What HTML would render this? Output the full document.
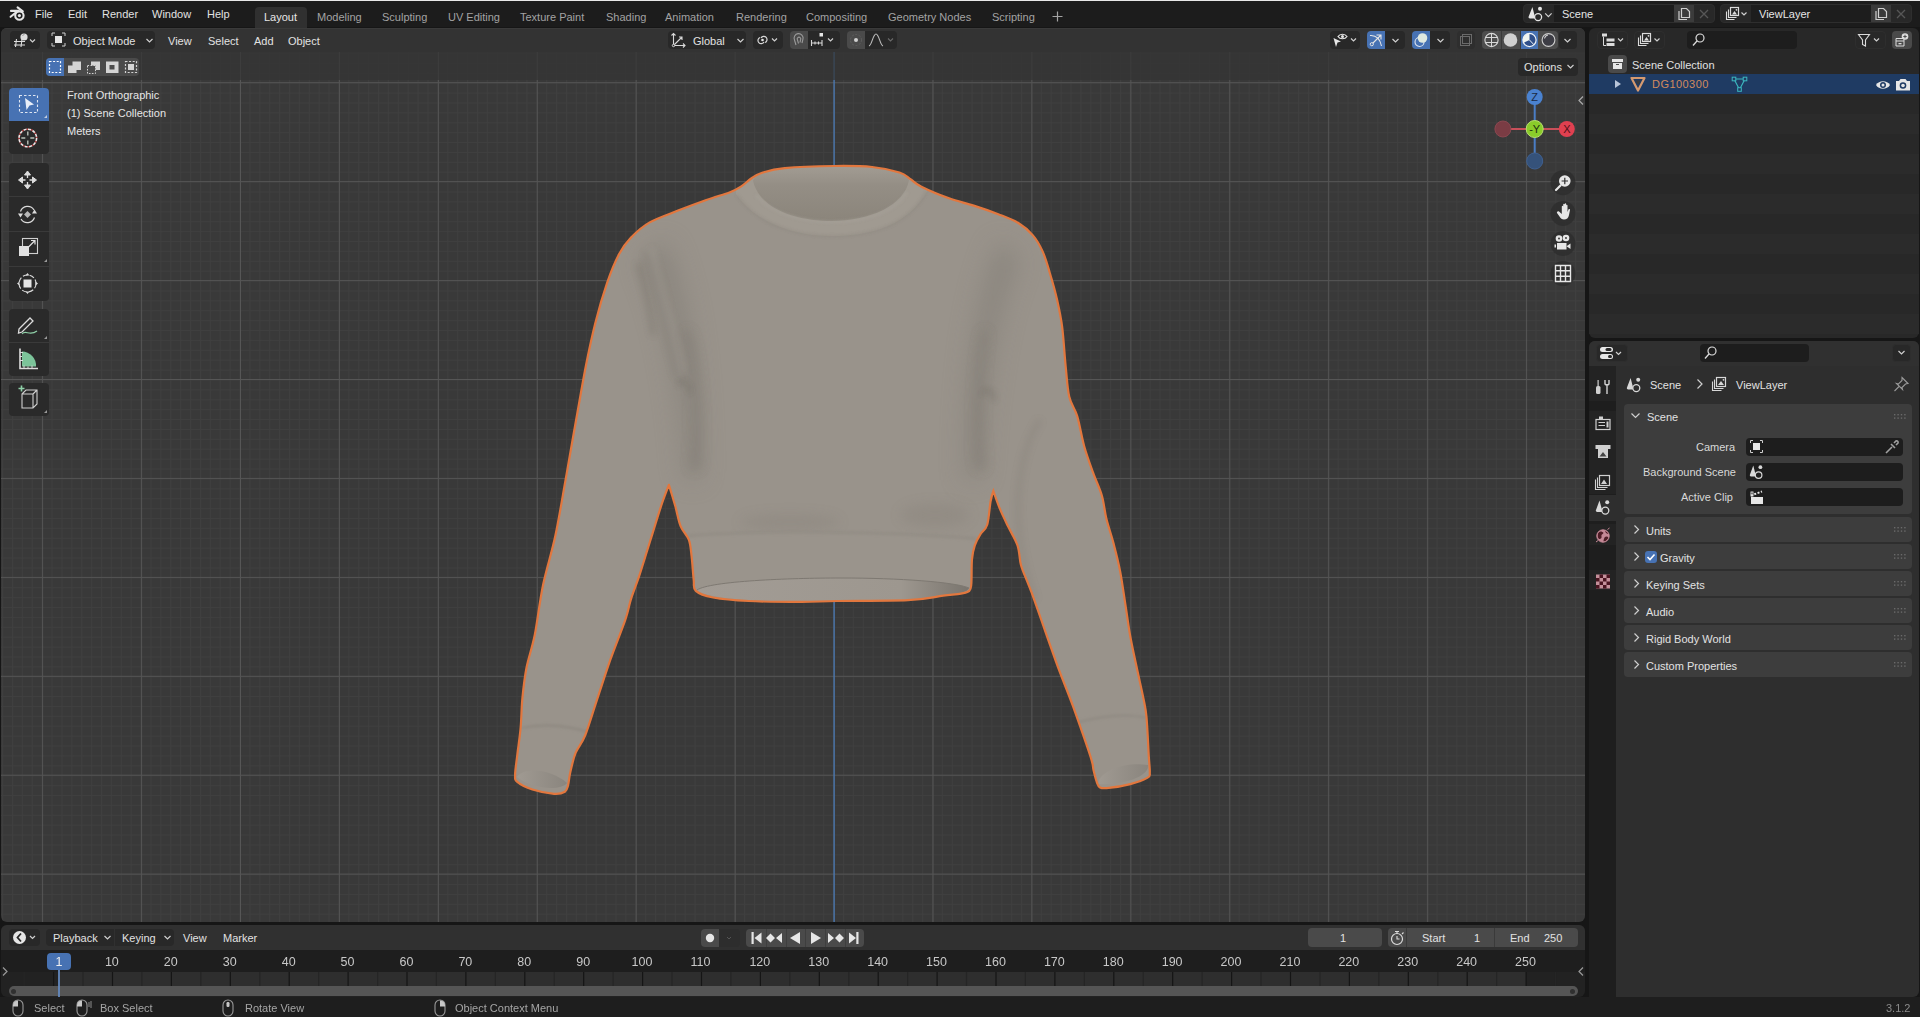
<!DOCTYPE html>
<html><head><meta charset="utf-8">
<style>
*{box-sizing:border-box;margin:0;padding:0}
html,body{width:1920px;height:1017px;overflow:hidden;background:#161616;font-family:"Liberation Sans",sans-serif;font-size:11px;color:#e6e6e6}
.a{position:absolute}
.t{position:absolute;white-space:pre;line-height:13px;font-size:11px;color:#e2e2e2;margin-left:1px}
.g{color:#a3a3a3}
.btn{position:absolute;background:#282828;border-radius:4px;border:1px solid #2c2c2c}
.dd{position:absolute;background:#282828;border-radius:4px}
svg{position:absolute;overflow:visible}
</style></head><body>
<div class="a" style="left:0;top:0;width:1920px;height:1px;background:#e8e8e8"></div>

<!-- ================= TOPBAR ================= -->
<div class="a" style="left:0;top:1px;width:1920px;height:26px;background:#1c1c1c">
</div>
<svg style="left:0;top:0" width="30" height="27">
 <circle cx="19.4" cy="15.6" r="4.2" fill="none" stroke="#e6e6e6" stroke-width="2.1"/>
 <circle cx="19.4" cy="15.6" r="1.6" fill="#e6e6e6"/>
 <path d="M11,10.9 H18.5" stroke="#e6e6e6" stroke-width="2.1" stroke-linecap="round"/>
 <path d="M10.6,16.8 L15.6,12.8" stroke="#e6e6e6" stroke-width="2.1" stroke-linecap="round"/>
 <path d="M17.6,7.3 L22.8,11.3" stroke="#e6e6e6" stroke-width="2.1" stroke-linecap="round"/>
</svg>
<div class="t" style="left:34px;top:8px">File</div>
<div class="t" style="left:67px;top:8px">Edit</div>
<div class="t" style="left:101px;top:8px">Render</div>
<div class="t" style="left:151px;top:8px">Window</div>
<div class="t" style="left:206px;top:8px">Help</div>
<div class="a" style="left:255px;top:7px;width:52px;height:21px;background:#303030;border-radius:4px 4px 0 0"></div>
<div class="t" style="left:263px;top:11px;color:#e6e6e6">Layout</div>
<div class="t g" style="left:316px;top:11px">Modeling</div>
<div class="t g" style="left:381px;top:11px">Sculpting</div>
<div class="t g" style="left:447px;top:11px">UV Editing</div>
<div class="t g" style="left:519px;top:11px">Texture Paint</div>
<div class="t g" style="left:605px;top:11px">Shading</div>
<div class="t g" style="left:664px;top:11px">Animation</div>
<div class="t g" style="left:735px;top:11px">Rendering</div>
<div class="t g" style="left:805px;top:11px">Compositing</div>
<div class="t g" style="left:887px;top:11px">Geometry Nodes</div>
<div class="t g" style="left:991px;top:11px">Scripting</div>
<svg style="left:1052px;top:11px" width="11" height="11"><path d="M5.5,0.5 V10.5 M0.5,5.5 H10.5" stroke="#a3a3a3" stroke-width="1.2"/></svg>
<!-- scene selector -->
<div class="a" style="left:1523px;top:4px;width:192px;height:19px;background:#282828;border-radius:4px;border:1px solid #2e2e2e"></div>
<div class="a" style="left:1554px;top:5px;width:120px;height:17px;background:#1d1d1d"></div>
<div class="a" style="left:1674px;top:5px;width:20px;height:17px;background:#3b3b3b"></div>
<svg style="left:1529px;top:6px" width="24" height="15">
 <path d="M3.4,0.9 L-0.5,11 Q-0.7,12.4 1,12.5 L5.6,12.6 Q6.5,12.4 6,11Z" fill="#e6e6e6"/><circle cx="11" cy="2.8" r="2" fill="#e6e6e6"/>
 <circle cx="9.1" cy="11.1" r="3.5" fill="#282828" stroke="#e6e6e6" stroke-width="1.3"/>
 <path d="M16.2,7.4 L19.4,10.6 L22.6,7.4" stroke="#cfcfcf" stroke-width="1.2" fill="none"/>
</svg>
<div class="t" style="left:1561px;top:7.5px;color:#e6e6e6">Scene</div>
<svg style="left:1677px;top:7px" width="14" height="13">
 <path d="M4.5,1.5 H9.5 L12.5,4.5 V10.5 H4.5 Z M2,4 V12.5 H10" stroke="#cfcfcf" stroke-width="1.2" fill="none"/>
</svg>
<svg style="left:1699px;top:9px" width="10" height="10"><path d="M1,1 L9,9 M9,1 L1,9" stroke="#575757" stroke-width="1.3"/></svg>
<!-- view layer selector -->
<div class="a" style="left:1720px;top:4px;width:192px;height:19px;background:#282828;border-radius:4px;border:1px solid #2e2e2e"></div>
<div class="a" style="left:1751px;top:5px;width:120px;height:17px;background:#1d1d1d"></div>
<div class="a" style="left:1871px;top:5px;width:20px;height:17px;background:#3b3b3b"></div>
<svg style="left:1725px;top:6px" width="24" height="15">
 <rect x="5.5" y="1.5" width="8" height="8" fill="none" stroke="#dcdcdc" stroke-width="1.2"/>
 <path d="M7,8.5 L9.5,5 L12,8.5Z" fill="#dcdcdc"/><circle cx="11.5" cy="3.8" r="0.9" fill="#dcdcdc"/>
 <path d="M3.5,3.5 V11.5 H11.5 M1.5,5.5 V13.5 H9.5" stroke="#dcdcdc" stroke-width="1.1" fill="none"/>
 <path d="M16.5,6.5 L19,9 L21.5,6.5" stroke="#cfcfcf" stroke-width="1.2" fill="none"/>
</svg>
<div class="t" style="left:1758px;top:7.5px;color:#e6e6e6">ViewLayer</div>
<svg style="left:1874px;top:7px" width="14" height="13">
 <path d="M4.5,1.5 H9.5 L12.5,4.5 V10.5 H4.5 Z M2,4 V12.5 H10" stroke="#cfcfcf" stroke-width="1.2" fill="none"/>
</svg>
<svg style="left:1896px;top:9px" width="10" height="10"><path d="M1,1 L9,9 M9,1 L1,9" stroke="#575757" stroke-width="1.3"/></svg>


<!-- ================= VIEWPORT ================= -->
<div id="viewport" class="a" style="left:1px;top:28px;width:1584px;height:894px;background:#393939;border-radius:6px;overflow:hidden">
 <svg style="left:-1px;top:0" width="1590" height="900">
  <defs><pattern id="minor" x="239.5" y="54.7" width="9.893" height="9.893" patternUnits="userSpaceOnUse">
   <path d="M0,0.5 H9.893 M0.5,0 V9.893" stroke="#3f3f3f" stroke-width="1" fill="none"/></pattern></defs>
  <rect x="0" y="0" width="1590" height="900" fill="url(#minor)"/>
  <g stroke="#565656" stroke-width="1"><line x1="42.6" y1="0" x2="42.6" y2="900"/><line x1="141.6" y1="0" x2="141.6" y2="900"/><line x1="240.5" y1="0" x2="240.5" y2="900"/><line x1="339.4" y1="0" x2="339.4" y2="900"/><line x1="438.4" y1="0" x2="438.4" y2="900"/><line x1="537.3" y1="0" x2="537.3" y2="900"/><line x1="636.2" y1="0" x2="636.2" y2="900"/><line x1="735.2" y1="0" x2="735.2" y2="900"/><line x1="933.0" y1="0" x2="933.0" y2="900"/><line x1="1031.9" y1="0" x2="1031.9" y2="900"/><line x1="1130.9" y1="0" x2="1130.9" y2="900"/><line x1="1229.8" y1="0" x2="1229.8" y2="900"/><line x1="1328.7" y1="0" x2="1328.7" y2="900"/><line x1="1427.7" y1="0" x2="1427.7" y2="900"/><line x1="1526.6" y1="0" x2="1526.6" y2="900"/><line x1="0" y1="54.7" x2="1590" y2="54.7"/><line x1="0" y1="153.6" x2="1590" y2="153.6"/><line x1="0" y1="252.6" x2="1590" y2="252.6"/><line x1="0" y1="351.5" x2="1590" y2="351.5"/><line x1="0" y1="450.4" x2="1590" y2="450.4"/><line x1="0" y1="549.4" x2="1590" y2="549.4"/><line x1="0" y1="648.3" x2="1590" y2="648.3"/><line x1="0" y1="747.2" x2="1590" y2="747.2"/><line x1="0" y1="846.1" x2="1590" y2="846.1"/></g>
  <line x1="834.1" y1="0" x2="834.1" y2="900" stroke="#4b78b0" stroke-width="1.4"/>
 </svg>
 <svg style="left:-1px;top:-28px" width="1590" height="921">
 <defs>
  <clipPath id="sw"><path d="M833.9,166.0 C848.5,165.8 861.3,165.9 872.2,167.0 C883.1,168.1 893.1,170.5 899.5,172.5 C905.9,174.5 906.9,176.7 910.5,179.1 C914.1,181.5 915.0,183.5 921.4,186.7 C927.8,189.9 940.4,195.2 949.1,198.3 C957.8,201.5 965.5,202.9 973.7,205.6 C981.9,208.2 990.9,211.3 998.3,214.2 C1005.7,217.1 1012.3,219.3 1018.0,222.8 C1023.7,226.3 1028.6,230.4 1032.7,235.1 C1036.8,239.8 1039.6,244.8 1042.5,251.1 C1045.4,257.4 1047.5,265.0 1049.9,273.2 C1052.4,281.4 1055.2,291.2 1057.2,300.2 C1059.2,309.2 1060.8,316.1 1062.2,327.2 C1063.6,338.2 1064.5,354.9 1065.7,366.5 C1066.9,378.1 1067.3,388.3 1069.2,396.6 C1071.1,404.9 1074.7,407.8 1077.2,416.1 C1079.7,424.4 1081.6,436.8 1084.2,446.2 C1086.8,455.6 1090.1,464.4 1093.1,472.7 C1096.0,481.0 1099.7,488.1 1101.9,495.8 C1104.1,503.5 1104.5,510.8 1106.4,518.8 C1108.4,526.8 1111.3,534.8 1113.6,543.6 C1115.9,552.4 1118.2,561.0 1120.2,571.6 C1122.2,582.2 1124.1,596.2 1125.8,607.1 C1127.5,618.0 1128.5,626.7 1130.4,637.0 C1132.3,647.3 1134.8,658.5 1137.0,668.8 C1139.2,679.1 1141.9,690.7 1143.5,698.7 C1145.1,706.7 1145.6,707.6 1146.5,717.0 C1147.4,726.4 1148.2,745.7 1148.7,754.9 C1149.2,764.1 1150.0,768.4 1149.8,772.2 C1149.6,776.0 1150.8,775.6 1147.6,777.6 C1144.3,779.6 1136.8,782.4 1130.3,784.1 C1123.8,785.8 1113.8,787.4 1108.7,787.9 C1103.7,788.4 1102.0,788.4 1100.0,787.4 C1098.0,786.4 1097.9,784.9 1096.8,782.0 C1095.7,779.1 1094.5,774.2 1093.5,770.0 C1092.5,765.8 1094.0,767.6 1090.6,756.9 C1087.1,746.2 1078.0,720.2 1072.8,705.7 C1067.5,691.2 1063.4,681.7 1059.1,670.2 C1054.8,658.7 1051.4,648.6 1047.2,636.8 C1043.0,624.9 1037.3,608.4 1034.0,599.1 C1030.7,589.8 1029.3,586.9 1027.1,581.2 C1024.9,575.5 1022.5,570.7 1020.9,564.7 C1019.3,558.7 1019.7,551.8 1017.5,545.4 C1015.3,539.0 1010.9,532.3 1007.9,526.1 C1004.9,519.9 1002.0,514.0 999.6,508.2 C997.2,502.3 993.4,491.0 993.4,491.0 C993.4,491.0 991.6,495.7 990.6,501.3 C989.6,506.9 988.9,519.2 987.2,524.7 C985.5,530.2 982.4,531.0 980.3,534.4 C978.2,537.8 976.2,541.3 974.8,545.4 C973.4,549.5 972.6,552.8 972.0,559.2 C971.4,565.6 971.8,578.7 971.3,584.0 C970.8,589.3 971.0,589.3 969.3,590.9 C967.6,592.5 965.3,592.8 961.0,593.6 C956.7,594.4 952.1,594.6 943.3,595.7 C934.4,596.8 925.6,599.3 907.9,600.2 C890.2,601.1 854.8,600.7 837.1,601.0 C819.4,601.3 816.5,601.9 801.7,601.9 C786.9,601.9 763.3,601.7 748.5,601.0 C733.7,600.3 721.9,599.2 713.1,597.5 C704.3,595.8 699.0,593.9 695.8,590.9 C692.6,587.9 694.4,585.5 693.7,579.8 C693.0,574.0 692.4,563.0 691.6,556.4 C690.8,549.8 690.7,544.9 688.9,539.9 C687.1,534.9 682.9,531.8 680.6,526.1 C678.3,520.4 677.1,512.4 675.1,505.5 C673.1,498.6 668.9,484.8 668.9,484.8 C668.9,484.8 663.9,497.7 661.3,505.5 C658.7,513.3 655.6,523.6 653.1,531.6 C650.6,539.6 648.5,546.4 646.2,553.7 C643.9,561.1 641.8,568.1 639.3,575.7 C636.8,583.3 633.4,591.7 631.0,599.1 C628.6,606.5 628.7,609.9 625.2,620.1 C621.7,630.3 614.9,646.8 610.2,660.2 C605.5,673.6 601.0,687.9 596.8,700.4 C592.6,712.9 588.6,726.8 585.1,735.5 C581.6,744.2 578.2,746.6 575.7,752.7 C573.2,758.8 571.6,766.8 570.3,772.2 C569.0,777.6 569.0,782.0 568.1,785.2 C567.2,788.5 567.2,790.3 564.9,791.7 C562.6,793.1 559.5,794.2 554.1,793.8 C548.7,793.4 538.5,791.5 532.4,789.5 C526.3,787.5 520.2,784.4 517.3,781.9 C514.4,779.4 515.1,778.9 515.1,774.4 C515.1,769.9 516.4,762.6 517.3,754.9 C518.2,747.1 519.8,737.4 520.6,727.9 C521.5,718.4 521.4,708.1 522.4,698.1 C523.4,688.1 524.4,678.3 526.5,667.8 C528.6,657.2 532.0,648.6 534.8,634.8 C537.5,621.0 539.6,601.7 543.0,585.2 C546.4,568.7 551.5,554.0 555.4,535.6 C559.3,517.2 562.9,494.4 566.4,475.1 C569.9,455.8 572.8,438.3 576.1,420.0 C579.4,401.7 582.8,381.4 586.0,365.2 C589.2,349.0 591.9,336.5 595.4,322.7 C598.9,308.9 603.3,294.0 607.2,282.6 C611.1,271.2 615.1,261.8 619.0,254.3 C622.9,246.8 625.7,243.1 630.8,237.8 C635.9,232.5 641.8,226.9 649.7,222.4 C657.6,217.9 668.6,214.3 678.0,210.6 C687.4,206.9 697.6,203.1 706.3,200.0 C715.0,196.9 724.2,194.4 730.0,192.2 C735.8,190.0 737.2,189.1 740.9,186.7 C744.5,184.3 748.2,180.4 751.9,178.0 C755.5,175.6 757.3,174.2 762.8,172.5 C768.3,170.8 772.9,169.2 784.7,168.1 C796.6,167.0 819.3,166.2 833.9,166.0Z"/></clipPath>
  <filter id="b2" x="-50%" y="-50%" width="200%" height="200%"><feGaussianBlur stdDeviation="1.5"/></filter>
  <filter id="b3" x="-50%" y="-50%" width="200%" height="200%"><feGaussianBlur stdDeviation="3"/></filter>
  <filter id="b6" x="-50%" y="-50%" width="200%" height="200%"><feGaussianBlur stdDeviation="6"/></filter>
  <filter id="b12" x="-50%" y="-50%" width="200%" height="200%"><feGaussianBlur stdDeviation="12"/></filter>
  <linearGradient id="neckg" x1="0" y1="0" x2="0" y2="1">
   <stop offset="0" stop-color="#a29c93"/><stop offset="0.35" stop-color="#948e85"/><stop offset="1" stop-color="#8b857b"/></linearGradient>
  <linearGradient id="hemg" x1="0" y1="0" x2="1" y2="0">
   <stop offset="0" stop-color="#a29c95"/><stop offset="0.75" stop-color="#9d978f"/><stop offset="1" stop-color="#7a756e"/></linearGradient>
  <linearGradient id="cuffg" x1="0" y1="0" x2="1" y2="0">
   <stop offset="0" stop-color="#a09a92"/><stop offset="1" stop-color="#8a857e"/></linearGradient>
 </defs>
 <g clip-path="url(#sw)">
  <rect x="500" y="150" width="670" height="660" fill="#99938b"/>
  <g filter="url(#b12)" opacity="0.5">
   <path d="M640,260 C660,300 680,380 685,480 L700,480 C700,380 690,290 665,240Z" fill="#7f7a73"/>
   <path d="M1020,260 C1000,300 985,380 980,480 L965,480 C965,380 975,290 1000,240Z" fill="#7f7a73"/>

  </g>
  <g filter="url(#b3)" opacity="0.45">
   <path d="M640,262 C646,285 652,310 655,335 L651,335 C648,310 642,285 636,265Z" fill="#777168"/>
   <path d="M678,385 C682,378 690,381 690,394" stroke="#5a554f" stroke-width="2.2" fill="none"/>
   <path d="M982,395 C986,387 994,389 994,401" stroke="#5a554f" stroke-width="2.2" fill="none"/>
   <path d="M1040,420 C1020,450 1005,520 1035,600" stroke="#7d7870" stroke-width="6" fill="none" opacity="0.5"/>
  </g>
  <g filter="url(#b6)" opacity="0.3">
   <path d="M682,330 C692,360 696,420 690,470 L700,470 C704,420 700,360 690,330Z" fill="#6e6962"/>
   <path d="M988,330 C982,360 980,420 986,470 L976,470 C972,420 976,360 982,330Z" fill="#6e6962"/>
  </g>
  <g filter="url(#b3)" opacity="0.33">
   <path d="M652,248 C662,290 676,330 684,372" stroke="#aaa49b" stroke-width="4" fill="none"/>
   <path d="M645,252 C652,290 666,335 676,378" stroke="#7b766e" stroke-width="3" fill="none"/>
  </g>
  <g filter="url(#b6)" fill="#857f77" opacity="0.3">
   <ellipse cx="790" cy="522" rx="50" ry="8"/><ellipse cx="935" cy="515" rx="35" ry="12"/>
  </g>
  <!-- hem band -->
  <path d="M686,535 C760,529 900,531 978,538 L975,598 L690,598Z" fill="#9a948c"/>
  <path d="M688,536 C760,530 900,532 976,539" stroke="#8a857d" stroke-width="1.3" fill="none" filter="url(#b2)"/>
  <path d="M697,590 C710,581 790,578 840,578 C900,578 955,582 969,588 C966,598 900,602 830,602 C760,602 705,599 697,590Z" fill="url(#hemg)"/>
  <path d="M697,590 C710,581 790,578 840,578 C900,578 955,582 969,588" stroke="#7e7972" stroke-width="1" fill="none"/>
  <!-- neck -->
  <path d="M736,194 C758,226 800,236 832,236 C870,236 908,226 928,190 L928,165 L736,165Z" fill="#a09a91"/>
  <path d="M737,195 C759,227 800,236 832,236 C870,236 907,227 927,191" stroke="#8a857d" stroke-width="1.2" fill="none" filter="url(#b2)" opacity="0.8"/>
  <path d="M753,180 C762,168 800,166 832,166 C865,166 900,168 909,180 C905,205 870,221 832,221 C795,221 758,208 753,180Z" fill="url(#neckg)"/>
  <path d="M756,195 C770,214 805,222 832,222 C862,222 895,213 907,192" stroke="#a8a39b" stroke-width="2" fill="none" opacity="0.7" filter="url(#b2)"/>
  <!-- cuffs -->
  <path d="M1076,723 C1100,716 1128,713 1146,718" stroke="#847f77" stroke-width="1.2" fill="none" filter="url(#b2)"/>
  <path d="M1098,784 C1100,770 1125,762 1148,765 C1150,775 1125,786 1098,784Z" fill="url(#cuffg)"/>
  <path d="M521,728 C545,723 570,726 591,733" stroke="#847f77" stroke-width="1.2" fill="none" filter="url(#b2)"/>
  <path d="M517,777 C525,766 552,770 567,783 C560,792 530,788 517,777Z" fill="url(#cuffg)"/>
 </g>
 <path d="M833.9,166.0 C848.5,165.8 861.3,165.9 872.2,167.0 C883.1,168.1 893.1,170.5 899.5,172.5 C905.9,174.5 906.9,176.7 910.5,179.1 C914.1,181.5 915.0,183.5 921.4,186.7 C927.8,189.9 940.4,195.2 949.1,198.3 C957.8,201.5 965.5,202.9 973.7,205.6 C981.9,208.2 990.9,211.3 998.3,214.2 C1005.7,217.1 1012.3,219.3 1018.0,222.8 C1023.7,226.3 1028.6,230.4 1032.7,235.1 C1036.8,239.8 1039.6,244.8 1042.5,251.1 C1045.4,257.4 1047.5,265.0 1049.9,273.2 C1052.4,281.4 1055.2,291.2 1057.2,300.2 C1059.2,309.2 1060.8,316.1 1062.2,327.2 C1063.6,338.2 1064.5,354.9 1065.7,366.5 C1066.9,378.1 1067.3,388.3 1069.2,396.6 C1071.1,404.9 1074.7,407.8 1077.2,416.1 C1079.7,424.4 1081.6,436.8 1084.2,446.2 C1086.8,455.6 1090.1,464.4 1093.1,472.7 C1096.0,481.0 1099.7,488.1 1101.9,495.8 C1104.1,503.5 1104.5,510.8 1106.4,518.8 C1108.4,526.8 1111.3,534.8 1113.6,543.6 C1115.9,552.4 1118.2,561.0 1120.2,571.6 C1122.2,582.2 1124.1,596.2 1125.8,607.1 C1127.5,618.0 1128.5,626.7 1130.4,637.0 C1132.3,647.3 1134.8,658.5 1137.0,668.8 C1139.2,679.1 1141.9,690.7 1143.5,698.7 C1145.1,706.7 1145.6,707.6 1146.5,717.0 C1147.4,726.4 1148.2,745.7 1148.7,754.9 C1149.2,764.1 1150.0,768.4 1149.8,772.2 C1149.6,776.0 1150.8,775.6 1147.6,777.6 C1144.3,779.6 1136.8,782.4 1130.3,784.1 C1123.8,785.8 1113.8,787.4 1108.7,787.9 C1103.7,788.4 1102.0,788.4 1100.0,787.4 C1098.0,786.4 1097.9,784.9 1096.8,782.0 C1095.7,779.1 1094.5,774.2 1093.5,770.0 C1092.5,765.8 1094.0,767.6 1090.6,756.9 C1087.1,746.2 1078.0,720.2 1072.8,705.7 C1067.5,691.2 1063.4,681.7 1059.1,670.2 C1054.8,658.7 1051.4,648.6 1047.2,636.8 C1043.0,624.9 1037.3,608.4 1034.0,599.1 C1030.7,589.8 1029.3,586.9 1027.1,581.2 C1024.9,575.5 1022.5,570.7 1020.9,564.7 C1019.3,558.7 1019.7,551.8 1017.5,545.4 C1015.3,539.0 1010.9,532.3 1007.9,526.1 C1004.9,519.9 1002.0,514.0 999.6,508.2 C997.2,502.3 993.4,491.0 993.4,491.0 C993.4,491.0 991.6,495.7 990.6,501.3 C989.6,506.9 988.9,519.2 987.2,524.7 C985.5,530.2 982.4,531.0 980.3,534.4 C978.2,537.8 976.2,541.3 974.8,545.4 C973.4,549.5 972.6,552.8 972.0,559.2 C971.4,565.6 971.8,578.7 971.3,584.0 C970.8,589.3 971.0,589.3 969.3,590.9 C967.6,592.5 965.3,592.8 961.0,593.6 C956.7,594.4 952.1,594.6 943.3,595.7 C934.4,596.8 925.6,599.3 907.9,600.2 C890.2,601.1 854.8,600.7 837.1,601.0 C819.4,601.3 816.5,601.9 801.7,601.9 C786.9,601.9 763.3,601.7 748.5,601.0 C733.7,600.3 721.9,599.2 713.1,597.5 C704.3,595.8 699.0,593.9 695.8,590.9 C692.6,587.9 694.4,585.5 693.7,579.8 C693.0,574.0 692.4,563.0 691.6,556.4 C690.8,549.8 690.7,544.9 688.9,539.9 C687.1,534.9 682.9,531.8 680.6,526.1 C678.3,520.4 677.1,512.4 675.1,505.5 C673.1,498.6 668.9,484.8 668.9,484.8 C668.9,484.8 663.9,497.7 661.3,505.5 C658.7,513.3 655.6,523.6 653.1,531.6 C650.6,539.6 648.5,546.4 646.2,553.7 C643.9,561.1 641.8,568.1 639.3,575.7 C636.8,583.3 633.4,591.7 631.0,599.1 C628.6,606.5 628.7,609.9 625.2,620.1 C621.7,630.3 614.9,646.8 610.2,660.2 C605.5,673.6 601.0,687.9 596.8,700.4 C592.6,712.9 588.6,726.8 585.1,735.5 C581.6,744.2 578.2,746.6 575.7,752.7 C573.2,758.8 571.6,766.8 570.3,772.2 C569.0,777.6 569.0,782.0 568.1,785.2 C567.2,788.5 567.2,790.3 564.9,791.7 C562.6,793.1 559.5,794.2 554.1,793.8 C548.7,793.4 538.5,791.5 532.4,789.5 C526.3,787.5 520.2,784.4 517.3,781.9 C514.4,779.4 515.1,778.9 515.1,774.4 C515.1,769.9 516.4,762.6 517.3,754.9 C518.2,747.1 519.8,737.4 520.6,727.9 C521.5,718.4 521.4,708.1 522.4,698.1 C523.4,688.1 524.4,678.3 526.5,667.8 C528.6,657.2 532.0,648.6 534.8,634.8 C537.5,621.0 539.6,601.7 543.0,585.2 C546.4,568.7 551.5,554.0 555.4,535.6 C559.3,517.2 562.9,494.4 566.4,475.1 C569.9,455.8 572.8,438.3 576.1,420.0 C579.4,401.7 582.8,381.4 586.0,365.2 C589.2,349.0 591.9,336.5 595.4,322.7 C598.9,308.9 603.3,294.0 607.2,282.6 C611.1,271.2 615.1,261.8 619.0,254.3 C622.9,246.8 625.7,243.1 630.8,237.8 C635.9,232.5 641.8,226.9 649.7,222.4 C657.6,217.9 668.6,214.3 678.0,210.6 C687.4,206.9 697.6,203.1 706.3,200.0 C715.0,196.9 724.2,194.4 730.0,192.2 C735.8,190.0 737.2,189.1 740.9,186.7 C744.5,184.3 748.2,180.4 751.9,178.0 C755.5,175.6 757.3,174.2 762.8,172.5 C768.3,170.8 772.9,169.2 784.7,168.1 C796.6,167.0 819.3,166.2 833.9,166.0Z" fill="none" stroke="#e2773e" stroke-width="2.2"/>
</svg>
 <div class="a" style="left:0;top:0;width:1584px;height:24px;background:#333333"></div>
 <div class="a" style="left:0;top:24px;width:1584px;height:28px;background:rgba(51,51,51,0.72)"></div>
 <div class="a" style="left:0;top:0;width:1584px;height:1px;background:#3a3a3a"></div>
</div>
<!-- viewport header -->
<div class="dd" style="left:10px;top:31px;width:30px;height:18px"></div>
<svg style="left:13px;top:32px" width="26" height="16">
 <path d="M1,9.5 H12 M1,13 H12 M3.5,7 L2.5,15 M9,7 L8,15" stroke="#dcdcdc" stroke-width="1.1" fill="none"/>
 <circle cx="11" cy="5" r="3.6" fill="#dcdcdc"/><path d="M9.5,4 A2,2 0 0 1 11.5,2.5" stroke="#888" stroke-width="0.8" fill="none"/>
 <path d="M17,7.5 L19.5,10 L22,7.5" stroke="#cfcfcf" stroke-width="1.2" fill="none"/>
</svg>
<div class="dd" style="left:47px;top:31px;width:108px;height:18px"></div>
<svg style="left:51px;top:32px" width="16" height="15">
 <path d="M1,4 V1 H4 M11,1 H14 V4 M14,11 V14 H11 M4,14 H1 V11" stroke="#cfcfcf" stroke-width="1" fill="none"/>
 <rect x="4" y="4" width="7" height="7" fill="#e6e6e6"/>
</svg>
<div class="t" style="left:72px;top:35px">Object Mode</div>
<svg style="left:145px;top:37px" width="10" height="8"><path d="M1.5,2 L4.5,5 L7.5,2" stroke="#cfcfcf" stroke-width="1.2" fill="none"/></svg>
<div class="t" style="left:167px;top:35px">View</div>
<div class="t" style="left:207px;top:35px">Select</div>
<div class="t" style="left:253px;top:35px">Add</div>
<div class="t" style="left:287px;top:35px">Object</div>

<!-- transform orientation -->
<div class="dd" style="left:668px;top:31px;width:78px;height:18px"></div>
<svg style="left:671px;top:32px" width="16" height="16">
 <path d="M2.5,13.5 V1.5 M0.5,3.5 L2.5,1.5 L4.5,3.5 M2.5,13.5 H14 M12,11.5 L14,13.5 L12,15.5 M2.5,13.5 L11,5 M8,5 H11 V8" stroke="#d8d8d8" stroke-width="1.1" fill="none"/>
 <circle cx="2.5" cy="13.5" r="1.2" fill="#282828" stroke="#d8d8d8" stroke-width="1"/>
</svg>
<div class="t" style="left:692px;top:35px">Global</div>
<svg style="left:736px;top:37px" width="10" height="8"><path d="M1.5,2 L4.5,5 L7.5,2" stroke="#cfcfcf" stroke-width="1.2" fill="none"/></svg>
<div class="dd" style="left:753px;top:31px;width:30px;height:18px"></div>
<svg style="left:756px;top:33px" width="26" height="14">
 <path d="M5,5 A3.2,3.2 0 1 1 9,9.5 M8,9 A3.2,3.2 0 1 1 4,4.5" stroke="#d8d8d8" stroke-width="1.2" fill="none"/>
 <circle cx="6.5" cy="7" r="1.3" fill="#e6e6e6"/>
 <path d="M16,5.5 L18.5,8 L21,5.5" stroke="#cfcfcf" stroke-width="1.2" fill="none"/>
</svg>
<div class="a" style="left:790px;top:31px;width:18px;height:18px;background:#4a4a4a;border-radius:4px 0 0 4px"></div>
<div class="a" style="left:808px;top:31px;width:32px;height:18px;background:#282828;border-radius:0 4px 4px 0"></div>
<svg style="left:792px;top:33px" width="14" height="14">
 <path d="M4,12 L2.5,7 A4.5,4.5 0 1 1 11,6 L10,10 M6.5,10.5 L5.5,7 A1.8,1.8 0 1 1 8.5,7 L8,9.5" stroke="#9a9a9a" stroke-width="1.1" fill="none"/>
</svg>
<svg style="left:810px;top:32px" width="30" height="16">
 <path d="M1.5,8 V14 M1.5,11 H12 M5,9.5 V12.5 M8.5,9.5 V12.5 M12,8 V14" stroke="#d8d8d8" stroke-width="1.1" fill="none"/>
 <rect x="9.5" y="1" width="3.5" height="3.5" fill="#e6e6e6"/>
 <path d="M18,6.5 L20.5,9 L23,6.5" stroke="#cfcfcf" stroke-width="1.2" fill="none"/>
</svg>
<div class="a" style="left:847px;top:31px;width:18px;height:18px;background:#4a4a4a;border-radius:4px 0 0 4px"></div>
<div class="a" style="left:865px;top:31px;width:32px;height:18px;background:#282828;border-radius:0 4px 4px 0"></div>
<svg style="left:848px;top:32px" width="16" height="16">
 <circle cx="8" cy="8" r="5.5" fill="none" stroke="#5e5e5e" stroke-width="1" stroke-dasharray="2 1.5"/>
 <circle cx="8" cy="8" r="2" fill="#d0d0d0"/>
</svg>
<svg style="left:868px;top:32px" width="28" height="16">
 <path d="M1,14 C4,13 5,2 8,2 C11,2 12,13 15,14" stroke="#bdbdbd" stroke-width="1.1" fill="none"/>
 <path d="M20,6.5 L22.5,9 L25,6.5" stroke="#6a6a6a" stroke-width="1.1" fill="none"/>
</svg>

<!-- right header -->
<div class="dd" style="left:1330px;top:31px;width:30px;height:18px"></div>
<svg style="left:1332px;top:32px" width="28" height="16">
 <path d="M6,4.5 C8,1.5 13,1.5 15,4.5 C13,7.5 8,7.5 6,4.5Z" fill="none" stroke="#e6e6e6" stroke-width="1.2"/>
 <circle cx="10.5" cy="4.5" r="1.5" fill="#e6e6e6"/>
 <path d="M1.5,6 L9,9.5 L5.5,10.5 L4,15Z" fill="#e6e6e6"/>
 <path d="M19,6.5 L21.5,9 L24,6.5" stroke="#cfcfcf" stroke-width="1.2" fill="none"/>
</svg>
<div class="a" style="left:1367px;top:31px;width:18px;height:18px;background:#4772b3;border-radius:4px 0 0 4px"></div>
<div class="a" style="left:1385px;top:31px;width:20px;height:18px;background:#282828;border-radius:0 4px 4px 0"></div>
<svg style="left:1368px;top:32px" width="16" height="16">
 <path d="M2,3.5 C8,3 12,7 13.5,14" stroke="#e6e6e6" stroke-width="1.1" fill="none"/>
 <path d="M5,11 L12.5,3.5 M8.5,3 H13 V7.5" stroke="#e6e6e6" stroke-width="1.1" fill="none"/>
 <circle cx="3.8" cy="12.2" r="1.6" fill="#4772b3" stroke="#e6e6e6" stroke-width="1"/>
</svg>
<svg style="left:1391px;top:37px" width="10" height="8"><path d="M1.5,2 L4.5,5 L7.5,2" stroke="#cfcfcf" stroke-width="1.2" fill="none"/></svg>
<div class="a" style="left:1412px;top:31px;width:18px;height:18px;background:#4772b3;border-radius:4px 0 0 4px"></div>
<div class="a" style="left:1430px;top:31px;width:20px;height:18px;background:#282828;border-radius:0 4px 4px 0"></div>
<svg style="left:1413px;top:32px" width="16" height="16">
 <circle cx="6.5" cy="10" r="4.5" fill="none" stroke="#dfe6f0" stroke-width="1.1"/>
 <circle cx="9.5" cy="6" r="4.8" fill="#dfe9e0"/>
</svg>
<svg style="left:1436px;top:37px" width="10" height="8"><path d="M1.5,2 L4.5,5 L7.5,2" stroke="#cfcfcf" stroke-width="1.2" fill="none"/></svg>
<div class="a" style="left:1457px;top:31px;width:18px;height:18px;background:#2e2e2e;border-radius:4px"></div>
<svg style="left:1459px;top:33px" width="14" height="14">
 <rect x="1.5" y="3.5" width="9" height="9" fill="none" stroke="#6a6a6a" stroke-width="1"/>
 <rect x="3.5" y="1.5" width="9" height="9" fill="none" stroke="#6a6a6a" stroke-width="1"/>
</svg>
<div class="a" style="left:1482px;top:31px;width:76px;height:18px;background:#4d4d4d;border-radius:4px"></div>
<div class="a" style="left:1520px;top:31px;width:18px;height:18px;background:#4772b3"></div>
<svg style="left:1482px;top:31px" width="76" height="18">
 <path d="M19.5,0 V18 M38.5,0 V18" stroke="#3a3a3a" stroke-width="1"/>
 <circle cx="9.5" cy="9" r="6.6" fill="none" stroke="#d8d8d8" stroke-width="1.1"/>
 <path d="M3.5,6.5 H15.5 M3.5,11.5 H15.5 M9.5,2.5 V15.5" stroke="#d8d8d8" stroke-width="1"/>
 <circle cx="28.5" cy="9" r="6.8" fill="#d0d0d0"/>
 <circle cx="47.5" cy="9" r="6.6" fill="#2f4f8a" stroke="#f0f4f8" stroke-width="1.2"/>
 <path d="M47.5,2.4 A6.6,6.6 0 0 0 41.5,11.8 L47.5,9Z" fill="#f0f4f0"/>
 <path d="M47.5,9 L52,13.8" stroke="#f0f4f8" stroke-width="1"/>
 <circle cx="66.5" cy="9" r="6.4" fill="#3d3d45" stroke="#cfcfcf" stroke-width="1.1"/>
 <path d="M62.5,7.5 A4.5,4.5 0 0 1 66,4" stroke="#cfcfcf" stroke-width="1.1" fill="none"/>
</svg>
<div class="a" style="left:1559px;top:31px;width:18px;height:18px;background:#282828;border-radius:4px"></div>
<svg style="left:1563px;top:37px" width="10" height="8"><path d="M1.5,2 L4.5,5 L7.5,2" stroke="#cfcfcf" stroke-width="1.2" fill="none"/></svg>

<!-- tool settings: select modes -->
<div class="a" style="left:46px;top:58px;width:93px;height:18px;background:#4a4a4a;border-radius:4px"></div>
<div class="a" style="left:46px;top:58px;width:18px;height:18px;background:#4772b3;border-radius:4px 0 0 4px"></div>
<svg style="left:46px;top:58px" width="93" height="18">
 <rect x="3.5" y="3.5" width="11" height="11" fill="none" stroke="#ffffff" stroke-width="1.2" stroke-dasharray="2 1.6"/>
 <path d="M22,7.5 H26.5 V3.5 H35 V12 H30.5 V15 H22Z" fill="#d4d4d4"/>
 <path d="M64.5,0 V18 M83.5,0 V18 M45.5,0 V18 M26.5,0 V18" stroke="#3e3e3e" stroke-width="0" />
 <rect x="41.5" y="7.5" width="8" height="8" fill="none" stroke="#d4d4d4" stroke-width="1" stroke-dasharray="1.6 1.4"/>
 <path d="M45,3.5 H54 V12 H49.5 V7.5 H45Z" fill="#d4d4d4"/>
 <path d="M60,3.5 H72.5 V15 H60Z M63.5,7 V11.5 H68.5 V7Z" fill="#d4d4d4" fill-rule="evenodd"/>
 <rect x="79.5" y="3.5" width="11" height="11" fill="none" stroke="#d4d4d4" stroke-width="1.2" stroke-dasharray="2 1.6"/>
 <rect x="82" y="6" width="6" height="6" fill="#d4d4d4"/>
</svg>
<div class="dd" style="left:1518px;top:58px;width:60px;height:18px"></div>
<div class="t" style="left:1523px;top:61px">Options</div>
<svg style="left:1566px;top:63px" width="10" height="8"><path d="M1.5,2 L4.5,5 L7.5,2" stroke="#cfcfcf" stroke-width="1.2" fill="none"/></svg>

<!-- left toolbar -->
<div class="a" style="left:9px;top:88px;width:40px;height:66px;background:#2a2a2a;border-radius:4px"></div>
<div class="a" style="left:9px;top:88px;width:40px;height:33px;background:#4772b3;border-radius:4px 4px 0 0"></div>
<svg style="left:9px;top:88px" width="40" height="33">
 <rect x="10.5" y="7.5" width="18" height="17" fill="none" stroke="#dfe6f2" stroke-width="1.1" stroke-dasharray="2.5 2"/>
 <path d="M16,10 L25,16.5 L20.5,17.5 L17.5,22Z" fill="#e8eef8"/>
 <path d="M35,30 L38,27 V30Z" fill="#c0cce0"/>
</svg>
<svg style="left:9px;top:121px" width="40" height="33">
 <circle cx="18.8" cy="17" r="8.8" fill="none" stroke="#f0e6e6" stroke-width="1.6" stroke-dasharray="3.2 1.4"/>
 <circle cx="18.8" cy="17" r="8.8" fill="none" stroke="#c04040" stroke-width="1.6" stroke-dasharray="1.4 3.2" stroke-dashoffset="-3.2"/>
 <path d="M18.8,10.5 V14.5 M18.8,19.5 V23.5 M12.3,17 H16.3 M21.3,17 H25.3" stroke="#b8c0b8" stroke-width="1.4"/>
</svg>
<div class="a" style="left:9px;top:163px;width:40px;height:138px;background:#2a2a2a;border-radius:4px"></div>
<div class="a" style="left:9px;top:196px;width:40px;height:1px;background:#3a3a3a"></div>
<div class="a" style="left:9px;top:231px;width:40px;height:1px;background:#3a3a3a"></div>
<div class="a" style="left:9px;top:266px;width:40px;height:1px;background:#3a3a3a"></div>
<svg style="left:9px;top:163px" width="40" height="138">
 <g fill="#dcdcdc" stroke="#dcdcdc">
  <path d="M18.5,8 L15.5,12 H21.5Z M18.5,26 L15.5,22 H21.5Z M9.5,17 L13.5,14 V20Z M27.5,17 L23.5,14 V20Z"/>
  <path d="M18.5,12 V15 M18.5,19 V22 M13.5,17 H16.5 M20.5,17 H23.5" stroke-width="1.3" fill="none"/>
 </g>
 <g transform="translate(0,34.5)">
  <path d="M11.5,14 A7.5,7.5 0 0 1 25,12.5 M25.5,20 A7.5,7.5 0 0 1 12,21.5" stroke="#dcdcdc" stroke-width="1.2" fill="none"/>
  <path d="M9,16 H14 L11.5,20Z M23,16 H28 L25.5,12Z" fill="#dcdcdc"/>
  <path d="M18.5,13.5 L22,17 L18.5,20.5 L15,17Z" fill="#b8b8b8"/>
 </g>
 <g transform="translate(0,69)">
  <rect x="13.5" y="6.5" width="15" height="15" fill="none" stroke="#cfcfcf" stroke-width="1.1"/>
  <rect x="10" y="14" width="10" height="10" fill="#e0e0e0"/>
  <path d="M19,15.5 L26,8.5 M22,8.5 H26 V12.5" stroke="#e0e0e0" stroke-width="1.2" fill="none"/>
  <path d="M35,30 L38,27 V30Z" fill="#9a9a9a"/>
 </g>
 <g transform="translate(0,103.5)">
  <circle cx="18.5" cy="17" r="8.5" fill="none" stroke="#dcdcdc" stroke-width="1.1" stroke-dasharray="5 2"/>
  <rect x="14.5" y="13" width="8" height="8" fill="#e6e6e6"/>
  <path d="M18.5,6.5 L16.5,9 H20.5Z M18.5,27.5 L16.5,25 H20.5Z M8,17 L10.5,15 V19Z M29,17 L26.5,15 V19Z" fill="#dcdcdc"/>
 </g>
</svg>
<div class="a" style="left:9px;top:309px;width:40px;height:67px;background:#2a2a2a;border-radius:4px"></div>
<div class="a" style="left:9px;top:342px;width:40px;height:1px;background:#3a3a3a"></div>
<svg style="left:9px;top:309px" width="40" height="67">
 <path d="M10,20 L21,9 L24,12 L13,23 L9.5,24Z" fill="none" stroke="#dcdcdc" stroke-width="1.3"/>
 <path d="M13,25 C17,20 20,28 28,22" stroke="#8fd0a8" stroke-width="1.2" fill="none"/>
 <path d="M35,30 L38,27 V30Z" fill="#9a9a9a"/>
 <g transform="translate(0,33.5)">
  <path d="M11,6 V26 H29" stroke="#dcdcdc" stroke-width="1.6" fill="none"/>
  <path d="M13,9 A14,14 0 0 1 27,24 H13Z" fill="#7cc49a"/>
  <path d="M11,10 H14 M11,14 H13 M11,18 H14 M15,26 V23 M19,26 V24 M23,26 V23" stroke="#dcdcdc" stroke-width="1"/>
 </g>
</svg>
<div class="a" style="left:9px;top:383px;width:40px;height:33px;background:#2a2a2a;border-radius:4px"></div>
<svg style="left:9px;top:383px" width="40" height="33">
 <path d="M13,11 L17,7 H28 V21 L24,25 H13Z M13,11 H24 V25 M24,11 L28,7" stroke="#d0d0d0" stroke-width="1.1" fill="none"/>
 <path d="M9.5,5.5 H15.5 M12.5,2.5 V8.5" stroke="#8fd0a8" stroke-width="1.6"/>
 <path d="M35,30 L38,27 V30Z" fill="#9a9a9a"/>
</svg>

<!-- overlay text -->
<div class="t" style="left:66px;top:89px;color:#e6e6e6">Front Orthographic</div>
<div class="t" style="left:66px;top:107px;color:#e6e6e6">(1) Scene Collection</div>
<div class="t" style="left:66px;top:125px;color:#e6e6e6">Meters</div>

<!-- nav gizmo -->
<svg style="left:1490px;top:85px" width="90" height="90">
 <path d="M44.7,12 V76" stroke="#4a7dc4" stroke-width="2"/>
 <path d="M12.9,44 H76.8" stroke="#c8505a" stroke-width="2"/>
 <circle cx="12.9" cy="44" r="8" fill="#7a3c44" stroke="#8a4750" stroke-width="1"/>
 <circle cx="44.7" cy="76" r="8" fill="#35527a" stroke="#3f6090" stroke-width="1"/>
 <circle cx="44.7" cy="12" r="8" fill="#4a82d0"/>
 <circle cx="76.8" cy="44" r="8" fill="#e04050"/>
 <circle cx="44.7" cy="44" r="8.5" fill="#8acc2a" stroke="#b8e070" stroke-width="1"/>
 <text x="44.7" y="16" font-size="11" text-anchor="middle" fill="#1a2a44" font-family="Liberation Sans">Z</text>
 <text x="76.8" y="48" font-size="11" text-anchor="middle" fill="#501018" font-family="Liberation Sans">X</text>
 <text x="44.7" y="48" font-size="11" text-anchor="middle" fill="#203010" font-family="Liberation Sans">-Y</text>
</svg>
<svg style="left:1577px;top:95px" width="8" height="12"><path d="M6,1.5 L2,5.5 L6,9.5" stroke="#aaaaaa" stroke-width="1.2" fill="none"/></svg>
<svg style="left:1549px;top:168px" width="30" height="122">
 <circle cx="14" cy="14.7" r="12.5" fill="#2d2d2d" opacity="0.8"/>
 <circle cx="14" cy="45.4" r="12.5" fill="#2d2d2d" opacity="0.8"/>
 <circle cx="14" cy="75.6" r="12.5" fill="#2d2d2d" opacity="0.8"/>
 <circle cx="14" cy="105.6" r="12.5" fill="#2d2d2d" opacity="0.8"/>
 <circle cx="15.8" cy="13" r="5.8" fill="#e6e6e6"/>
 <path d="M11.5,17.5 L7,22" stroke="#e6e6e6" stroke-width="2.2" stroke-linecap="round"/>
 <path d="M15.8,9.8 V16.2 M12.6,13 H19" stroke="#2d2d2d" stroke-width="1.2"/>
 <path d="M8,45 L10.5,48.5 C11.5,50.5 13,51.5 15,51.5 C17.5,51.5 19.5,50 20,47 L21,42 C21.2,41 20,40.6 19.5,41.5 L18.5,44 V37.5 C18.5,36.6 17.2,36.6 17.2,37.5 V43 V36 C17.2,35 15.7,35 15.7,36 V43 V36.5 C15.7,35.5 14.2,35.5 14.2,36.5 V43.5 V38.5 C14.2,37.6 12.8,37.6 12.8,38.5 V46 L10,43.5 C9,42.8 7.5,43.8 8,45Z" fill="#e6e6e6"/>
 <circle cx="10" cy="70.5" r="3.3" fill="#e6e6e6"/><circle cx="17" cy="70" r="3.3" fill="#e6e6e6"/>
 <circle cx="10" cy="70.5" r="0.9" fill="#2d2d2d"/><circle cx="17" cy="70" r="0.9" fill="#2d2d2d"/>
 <rect x="8" y="75" width="9.5" height="6.5" fill="#e6e6e6"/><path d="M17.5,78.2 L21.5,75.5 V81Z" fill="#e6e6e6"/>
 <rect x="5.5" y="76.5" width="1.5" height="3" fill="#e6e6e6"/>
 <path d="M6.5,97.5 H21.5 V113.5 H6.5Z M6.5,102.8 H21.5 M6.5,108.2 H21.5 M11.5,97.5 V113.5 M16.5,97.5 V113.5" stroke="#e6e6e6" stroke-width="1.4" fill="none"/>
</svg>


<!-- ================= TIMELINE ================= -->
<div id="timeline" class="a" style="left:1px;top:925px;width:1584px;height:72px;background:#222222;border-radius:6px;overflow:hidden">
 <div class="a" style="left:0;top:0;width:1584px;height:25px;background:#303030"></div>
 <div class="a" style="left:0;top:25px;width:1584px;height:22px;background:#1e1e1e"></div>
 <div class="a" style="left:58px;top:47px;width:1467px;height:14px;background:#2e2e2e"></div>
</div>
<div class="dd" style="left:9px;top:929px;width:31px;height:17px"></div>
<svg style="left:12px;top:929px" width="28" height="17">
 <circle cx="7.5" cy="8.5" r="6.5" fill="#e6e6e6"/><path d="M9,4.5 L5.5,8.5 L9,12.5" stroke="#282828" stroke-width="1.8" fill="none"/>
 <path d="M18,7 L20.5,9.5 L23,7" stroke="#cfcfcf" stroke-width="1.2" fill="none"/>
</svg>
<div class="dd" style="left:46px;top:929px;width:128px;height:17px"></div>
<div class="a" style="left:114px;top:929px;width:1px;height:17px;background:#303030"></div>
<div class="t" style="left:52px;top:932px">Playback</div>
<svg style="left:103px;top:934px" width="10" height="8"><path d="M1.5,2 L4.5,5 L7.5,2" stroke="#cfcfcf" stroke-width="1.2" fill="none"/></svg>
<div class="t" style="left:121px;top:932px">Keying</div>
<svg style="left:163px;top:934px" width="10" height="8"><path d="M1.5,2 L4.5,5 L7.5,2" stroke="#cfcfcf" stroke-width="1.2" fill="none"/></svg>
<div class="t" style="left:182px;top:932px">View</div>
<div class="t" style="left:222px;top:932px">Marker</div>
<div class="a" style="left:701px;top:929px;width:39px;height:18px;background:#2d2d2d;border-radius:4px"></div>
<div class="a" style="left:701px;top:929px;width:18px;height:18px;background:#4a4a4a;border-radius:4px 0 0 4px"></div>
<svg style="left:701px;top:929px" width="40" height="18">
 <circle cx="9" cy="9" r="4.2" fill="#e6e6e6"/>
 <path d="M26,8 L28,10 L30,8" stroke="#555" stroke-width="1" fill="none"/>
</svg>
<div class="a" style="left:746px;top:929px;width:118px;height:18px;background:#4a4a4a;border-radius:4px"></div>
<div class="a" style="left:765.5px;top:929px;width:1px;height:18px;background:#3e3e3e"></div>
<div class="a" style="left:785.5px;top:929px;width:1px;height:18px;background:#3e3e3e"></div>
<div class="a" style="left:805px;top:929px;width:1px;height:18px;background:#3e3e3e"></div>
<div class="a" style="left:825px;top:929px;width:1px;height:18px;background:#3e3e3e"></div>
<div class="a" style="left:844.5px;top:929px;width:1px;height:18px;background:#3e3e3e"></div>
<svg style="left:746px;top:929px" width="118" height="18">
 <g fill="#e6e6e6">
 <rect x="5.5" y="3" width="2.2" height="12"/><path d="M15.5,3.5 V14.5 L8.5,9Z"/>
 <path d="M20,9 L24.5,4.5 L29,9 L24.5,13.5Z M36,4 V14 L30,9Z"/>
 <path d="M54,3 V15 L44,9Z"/>
 <path d="M65,3 V15 L75,9Z"/>
 <path d="M82,4 V14 L88,9Z M89,9 L93.5,4.5 L98,9 L93.5,13.5Z"/>
 <path d="M103,3.5 V14.5 L110,9Z"/><rect x="110.3" y="3" width="2.2" height="12"/>
 </g>
</svg>
<div class="a" style="left:1308px;top:928px;width:74px;height:19px;background:#4a4a4a;border-radius:4px"></div>
<div class="t" style="left:1339px;top:932px">1</div>
<div class="a" style="left:1388px;top:928px;width:190px;height:19px;background:#4a4a4a;border-radius:4px"></div>
<div class="a" style="left:1406px;top:928px;width:1px;height:19px;background:#3a3a3a"></div>
<div class="a" style="left:1494px;top:928px;width:1px;height:19px;background:#3a3a3a"></div>
<svg style="left:1389px;top:929px" width="18" height="18">
 <circle cx="8" cy="10" r="5.5" fill="none" stroke="#dcdcdc" stroke-width="1.2"/>
 <path d="M6,2.5 H10 M8,2.5 V4.5 M8,7 V10 H10.5 M13,5 L14.5,3.5" stroke="#dcdcdc" stroke-width="1.1" fill="none"/>
</svg>
<div class="t" style="left:1421px;top:932px">Start</div>
<div class="t" style="left:1473px;top:932px">1</div>
<div class="t" style="left:1509px;top:932px">End</div>
<div class="t" style="left:1543px;top:932px">250</div>

<svg style="left:0;top:0" width="1586" height="1000"><line x1="24.2" y1="972" x2="24.2" y2="986" stroke="#252525" stroke-width="1.2"/><line x1="53.6" y1="972" x2="53.6" y2="986" stroke="#151515" stroke-width="1.2"/><line x1="83.0" y1="972" x2="83.0" y2="986" stroke="#252525" stroke-width="1.2"/><line x1="112.5" y1="972" x2="112.5" y2="986" stroke="#151515" stroke-width="1.2"/><line x1="141.9" y1="972" x2="141.9" y2="986" stroke="#252525" stroke-width="1.2"/><line x1="171.4" y1="972" x2="171.4" y2="986" stroke="#151515" stroke-width="1.2"/><line x1="200.8" y1="972" x2="200.8" y2="986" stroke="#252525" stroke-width="1.2"/><line x1="230.3" y1="972" x2="230.3" y2="986" stroke="#151515" stroke-width="1.2"/><line x1="259.8" y1="972" x2="259.8" y2="986" stroke="#252525" stroke-width="1.2"/><line x1="289.2" y1="972" x2="289.2" y2="986" stroke="#151515" stroke-width="1.2"/><line x1="318.6" y1="972" x2="318.6" y2="986" stroke="#252525" stroke-width="1.2"/><line x1="348.1" y1="972" x2="348.1" y2="986" stroke="#151515" stroke-width="1.2"/><line x1="377.6" y1="972" x2="377.6" y2="986" stroke="#252525" stroke-width="1.2"/><line x1="407.0" y1="972" x2="407.0" y2="986" stroke="#151515" stroke-width="1.2"/><line x1="436.4" y1="972" x2="436.4" y2="986" stroke="#252525" stroke-width="1.2"/><line x1="465.9" y1="972" x2="465.9" y2="986" stroke="#151515" stroke-width="1.2"/><line x1="495.3" y1="972" x2="495.3" y2="986" stroke="#252525" stroke-width="1.2"/><line x1="524.8" y1="972" x2="524.8" y2="986" stroke="#151515" stroke-width="1.2"/><line x1="554.2" y1="972" x2="554.2" y2="986" stroke="#252525" stroke-width="1.2"/><line x1="583.7" y1="972" x2="583.7" y2="986" stroke="#151515" stroke-width="1.2"/><line x1="613.1" y1="972" x2="613.1" y2="986" stroke="#252525" stroke-width="1.2"/><line x1="642.6" y1="972" x2="642.6" y2="986" stroke="#151515" stroke-width="1.2"/><line x1="672.0" y1="972" x2="672.0" y2="986" stroke="#252525" stroke-width="1.2"/><line x1="701.5" y1="972" x2="701.5" y2="986" stroke="#151515" stroke-width="1.2"/><line x1="730.9" y1="972" x2="730.9" y2="986" stroke="#252525" stroke-width="1.2"/><line x1="760.4" y1="972" x2="760.4" y2="986" stroke="#151515" stroke-width="1.2"/><line x1="789.8" y1="972" x2="789.8" y2="986" stroke="#252525" stroke-width="1.2"/><line x1="819.3" y1="972" x2="819.3" y2="986" stroke="#151515" stroke-width="1.2"/><line x1="848.8" y1="972" x2="848.8" y2="986" stroke="#252525" stroke-width="1.2"/><line x1="878.2" y1="972" x2="878.2" y2="986" stroke="#151515" stroke-width="1.2"/><line x1="907.6" y1="972" x2="907.6" y2="986" stroke="#252525" stroke-width="1.2"/><line x1="937.1" y1="972" x2="937.1" y2="986" stroke="#151515" stroke-width="1.2"/><line x1="966.5" y1="972" x2="966.5" y2="986" stroke="#252525" stroke-width="1.2"/><line x1="996.0" y1="972" x2="996.0" y2="986" stroke="#151515" stroke-width="1.2"/><line x1="1025.4" y1="972" x2="1025.4" y2="986" stroke="#252525" stroke-width="1.2"/><line x1="1054.9" y1="972" x2="1054.9" y2="986" stroke="#151515" stroke-width="1.2"/><line x1="1084.3" y1="972" x2="1084.3" y2="986" stroke="#252525" stroke-width="1.2"/><line x1="1113.8" y1="972" x2="1113.8" y2="986" stroke="#151515" stroke-width="1.2"/><line x1="1143.2" y1="972" x2="1143.2" y2="986" stroke="#252525" stroke-width="1.2"/><line x1="1172.7" y1="972" x2="1172.7" y2="986" stroke="#151515" stroke-width="1.2"/><line x1="1202.1" y1="972" x2="1202.1" y2="986" stroke="#252525" stroke-width="1.2"/><line x1="1231.6" y1="972" x2="1231.6" y2="986" stroke="#151515" stroke-width="1.2"/><line x1="1261.0" y1="972" x2="1261.0" y2="986" stroke="#252525" stroke-width="1.2"/><line x1="1290.5" y1="972" x2="1290.5" y2="986" stroke="#151515" stroke-width="1.2"/><line x1="1320.0" y1="972" x2="1320.0" y2="986" stroke="#252525" stroke-width="1.2"/><line x1="1349.4" y1="972" x2="1349.4" y2="986" stroke="#151515" stroke-width="1.2"/><line x1="1378.8" y1="972" x2="1378.8" y2="986" stroke="#252525" stroke-width="1.2"/><line x1="1408.3" y1="972" x2="1408.3" y2="986" stroke="#151515" stroke-width="1.2"/><line x1="1437.8" y1="972" x2="1437.8" y2="986" stroke="#252525" stroke-width="1.2"/><line x1="1467.2" y1="972" x2="1467.2" y2="986" stroke="#151515" stroke-width="1.2"/><line x1="1496.6" y1="972" x2="1496.6" y2="986" stroke="#252525" stroke-width="1.2"/><line x1="1526.1" y1="972" x2="1526.1" y2="986" stroke="#151515" stroke-width="1.2"/><line x1="1555.5" y1="972" x2="1555.5" y2="986" stroke="#252525" stroke-width="1.2"/></svg>
<div class="t" style="left:103.9px;top:955.5px;color:#c8c8c8;font-size:12.5px">10</div>
<div class="t" style="left:162.8px;top:955.5px;color:#c8c8c8;font-size:12.5px">20</div>
<div class="t" style="left:221.8px;top:955.5px;color:#c8c8c8;font-size:12.5px">30</div>
<div class="t" style="left:280.7px;top:955.5px;color:#c8c8c8;font-size:12.5px">40</div>
<div class="t" style="left:339.6px;top:955.5px;color:#c8c8c8;font-size:12.5px">50</div>
<div class="t" style="left:398.5px;top:955.5px;color:#c8c8c8;font-size:12.5px">60</div>
<div class="t" style="left:457.4px;top:955.5px;color:#c8c8c8;font-size:12.5px">70</div>
<div class="t" style="left:516.2px;top:955.5px;color:#c8c8c8;font-size:12.5px">80</div>
<div class="t" style="left:575.2px;top:955.5px;color:#c8c8c8;font-size:12.5px">90</div>
<div class="t" style="left:630.6px;top:955.5px;color:#c8c8c8;font-size:12.5px">100</div>
<div class="t" style="left:689.5px;top:955.5px;color:#c8c8c8;font-size:12.5px">110</div>
<div class="t" style="left:748.4px;top:955.5px;color:#c8c8c8;font-size:12.5px">120</div>
<div class="t" style="left:807.3px;top:955.5px;color:#c8c8c8;font-size:12.5px">130</div>
<div class="t" style="left:866.2px;top:955.5px;color:#c8c8c8;font-size:12.5px">140</div>
<div class="t" style="left:925.1px;top:955.5px;color:#c8c8c8;font-size:12.5px">150</div>
<div class="t" style="left:984.0px;top:955.5px;color:#c8c8c8;font-size:12.5px">160</div>
<div class="t" style="left:1042.9px;top:955.5px;color:#c8c8c8;font-size:12.5px">170</div>
<div class="t" style="left:1101.8px;top:955.5px;color:#c8c8c8;font-size:12.5px">180</div>
<div class="t" style="left:1160.7px;top:955.5px;color:#c8c8c8;font-size:12.5px">190</div>
<div class="t" style="left:1219.6px;top:955.5px;color:#c8c8c8;font-size:12.5px">200</div>
<div class="t" style="left:1278.5px;top:955.5px;color:#c8c8c8;font-size:12.5px">210</div>
<div class="t" style="left:1337.4px;top:955.5px;color:#c8c8c8;font-size:12.5px">220</div>
<div class="t" style="left:1396.3px;top:955.5px;color:#c8c8c8;font-size:12.5px">230</div>
<div class="t" style="left:1455.2px;top:955.5px;color:#c8c8c8;font-size:12.5px">240</div>
<div class="t" style="left:1514.1px;top:955.5px;color:#c8c8c8;font-size:12.5px">250</div>
<div class="a" style="left:47px;top:953px;width:24px;height:17px;background:#4772b3;border-radius:4px"></div>
<div class="t" style="left:54.5px;top:956px;color:#f0f0f0;font-size:12.5px">1</div>
<div class="a" style="left:9px;top:986px;width:1569px;height:10px;background:#555555;border-radius:5px"></div>
<div class="a" style="left:11px;top:988.5px;width:5px;height:5px;background:#303030;border-radius:3px"></div>
<div class="a" style="left:1570px;top:988.5px;width:5px;height:5px;background:#303030;border-radius:3px"></div>
<svg style="left:1px;top:966px" width="8" height="12"><path d="M2,1.5 L6,5.5 L2,9.5" stroke="#999" stroke-width="1.2" fill="none"/></svg>
<svg style="left:1577px;top:966px" width="8" height="12"><path d="M6,1.5 L2,5.5 L6,9.5" stroke="#999" stroke-width="1.2" fill="none"/></svg>

<div class="a" style="left:58.2px;top:970px;width:1.6px;height:27px;background:#6388be;opacity:0.9"></div>


<!-- ================= OUTLINER ================= -->
<div id="outliner" class="a" style="left:1589px;top:28px;width:330px;height:310px;background:#282828;border-radius:6px;overflow:hidden">
</div>
<div class="a" style="left:1589px;top:114px;width:330px;height:20px;background:#2b2b2b"></div>
<div class="a" style="left:1589px;top:154px;width:330px;height:20px;background:#2b2b2b"></div>
<div class="a" style="left:1589px;top:194px;width:330px;height:20px;background:#2b2b2b"></div>
<div class="a" style="left:1589px;top:234px;width:330px;height:20px;background:#2b2b2b"></div>
<div class="a" style="left:1589px;top:274px;width:330px;height:20px;background:#2b2b2b"></div>
<div class="a" style="left:1589px;top:314px;width:330px;height:20px;background:#2b2b2b"></div>
<div class="a" style="left:1589px;top:74px;width:330px;height:20px;background:#1f3b63"></div>
<div class="dd" style="left:1597px;top:31px;width:31px;height:18px;border:1px solid #2e2e2e"></div>
<svg style="left:1599px;top:32px" width="28" height="16">
 <rect x="3" y="1.5" width="5" height="3" fill="#dcdcdc"/>
 <path d="M4.5,4.5 V13.5 H7" stroke="#dcdcdc" stroke-width="1" fill="none"/>
 <rect x="7.5" y="6.5" width="8" height="3" fill="#dcdcdc"/><rect x="7.5" y="11" width="8" height="3" fill="#dcdcdc"/>
 <path d="M19,6.5 L21.5,9 L24,6.5" stroke="#cfcfcf" stroke-width="1.2" fill="none"/>
</svg>
<div class="dd" style="left:1634px;top:31px;width:31px;height:18px;border:1px solid #2e2e2e"></div>
<svg style="left:1637px;top:32px" width="28" height="16">
 <rect x="5.5" y="1.5" width="8" height="8" fill="none" stroke="#dcdcdc" stroke-width="1.2"/>
 <path d="M7,8.5 L9.5,5 L12,8.5Z" fill="#dcdcdc"/><circle cx="11.5" cy="3.8" r="0.9" fill="#dcdcdc"/>
 <path d="M3.5,3.5 V11.5 H11.5 M1.5,5.5 V13.5 H9.5" stroke="#dcdcdc" stroke-width="1.1" fill="none"/>
 <path d="M17.5,6.5 L20,9 L22.5,6.5" stroke="#cfcfcf" stroke-width="1.2" fill="none"/>
</svg>
<div class="a" style="left:1687px;top:31px;width:110px;height:18px;background:#1d1d1d;border-radius:4px"></div>
<svg style="left:1691px;top:32px" width="16" height="16">
 <circle cx="9" cy="6" r="4" fill="none" stroke="#dcdcdc" stroke-width="1.2"/><path d="M6,9 L2,13.5" stroke="#dcdcdc" stroke-width="1.3"/>
</svg>
<div class="dd" style="left:1855px;top:31px;width:31px;height:18px;border:1px solid #2e2e2e"></div>
<svg style="left:1857px;top:32px" width="28" height="16">
 <path d="M1.5,2.5 H12.5 L8.5,8 V14 L5.5,12.5 V8Z" fill="none" stroke="#dcdcdc" stroke-width="1.1"/>
 <path d="M17,6.5 L19.5,9 L22,6.5" stroke="#cfcfcf" stroke-width="1.2" fill="none"/>
</svg>
<div class="a" style="left:1892px;top:31px;width:20px;height:18px;background:#4a4a4a;border-radius:4px"></div>
<svg style="left:1894px;top:32px" width="16" height="16">
 <path d="M2,6.5 H10 V14 H2Z M2,9 H10" stroke="#dcdcdc" stroke-width="1" fill="none"/><rect x="4.5" y="11" width="3" height="1.3" fill="#dcdcdc"/>
 <circle cx="11" cy="4.5" r="3.3" fill="#dcdcdc"/><path d="M11,2.8 V6.2 M9.3,4.5 H12.7" stroke="#4a4a4a" stroke-width="1"/>
</svg>
<div class="a" style="left:1608px;top:55px;width:19px;height:18px;background:#4a4a4a;border-radius:4px"></div>
<svg style="left:1608px;top:55px" width="19" height="18">
 <rect x="4" y="4" width="11" height="3" fill="#e6e6e6"/><rect x="5" y="8" width="9" height="6" fill="#e6e6e6"/>
 <rect x="8" y="9" width="3" height="1" fill="#4a4a4a"/>
</svg>
<div class="t" style="left:1631px;top:59px">Scene Collection</div>
<svg style="left:1613px;top:79px" width="10" height="10"><path d="M2,1 L8,5 L2,9Z" fill="#b8c4d8"/></svg>
<svg style="left:1630px;top:76px" width="16" height="16">
 <path d="M1.5,2 H14.5 L8,14.5Z" fill="none" stroke="#d59a70" stroke-width="2.2" stroke-linejoin="round"/>
 <path d="M5.5,4.5 H10.5 L8,9Z" fill="#3a3a3a"/>
</svg>
<div class="t" style="left:1651px;top:78px;color:#d28a5e;letter-spacing:0.45px">DG100300</div>
<svg style="left:1731px;top:76px" width="17" height="17">
 <path d="M3,3 H14 L8.5,13.5Z" fill="none" stroke="#3cb8c0" stroke-width="1.1"/>
 <rect x="1.2" y="1.2" width="3.6" height="3.6" fill="#1f3b63" stroke="#3cb8c0" stroke-width="1"/>
 <rect x="12.2" y="1.2" width="3.6" height="3.6" fill="#1f3b63" stroke="#3cb8c0" stroke-width="1"/>
 <rect x="6.7" y="11.7" width="3.6" height="3.6" fill="#1f3b63" stroke="#3cb8c0" stroke-width="1"/>
</svg>
<svg style="left:1875px;top:78px" width="16" height="14">
 <path d="M1,7 C4,2 12,2 15,7 C12,12 4,12 1,7Z" fill="#e6e6e6"/>
 <circle cx="8" cy="7" r="3" fill="#1f3b63"/><circle cx="8" cy="7" r="1.5" fill="#e6e6e6"/>
</svg>
<svg style="left:1895px;top:77px" width="16" height="15">
 <path d="M1,4 H4 L5.5,2 H10.5 L12,4 H15 V13.5 H1Z" fill="#e6e6e6"/>
 <circle cx="8" cy="8.5" r="3.3" fill="#1f3b63"/><circle cx="8" cy="8.5" r="1.8" fill="#e6e6e6"/>
</svg>


<!-- ================= PROPERTIES ================= -->
<div id="props" class="a" style="left:1589px;top:341px;width:330px;height:656px;background:#2e2e2e;border-radius:6px;overflow:hidden">
</div>
<div class="a" style="left:1589px;top:341px;width:330px;height:25px;background:#303030;border-radius:6px 6px 0 0"></div>
<div class="a" style="left:1589px;top:366px;width:27px;height:631px;background:#1e1e1e"></div>
<div class="a" style="left:1589px;top:366px;width:27px;height:35px;background:#232323"></div>
<div class="a" style="left:1589px;top:411px;width:27px;height:83px;background:#232323"></div>
<div class="a" style="left:1589px;top:495px;width:27px;height:26px;background:#2e2e2e"></div>
<div class="a" style="left:1589px;top:524px;width:27px;height:21px;background:#232323"></div>
<div class="a" style="left:1589px;top:570px;width:27px;height:20px;background:#232323"></div>
<div class="dd" style="left:1596px;top:344px;width:32px;height:18px;border:1px solid #2e2e2e"></div>
<svg style="left:1599px;top:345px" width="28" height="16">
 <rect x="1" y="2" width="13" height="5" rx="2.5" fill="#e6e6e6"/><rect x="6.5" y="3" width="6" height="3" rx="1.5" fill="#282828"/>
 <rect x="1" y="9" width="13" height="5" rx="2.5" fill="#e6e6e6"/><rect x="9" y="10" width="4" height="3" rx="1.5" fill="#282828"/>
 <path d="M17,7 L19.5,9.5 L22,7" stroke="#cfcfcf" stroke-width="1.2" fill="none"/>
</svg>
<div class="a" style="left:1700px;top:344px;width:109px;height:18px;background:#1d1d1d;border-radius:4px"></div>
<svg style="left:1703px;top:345px" width="16" height="16">
 <circle cx="9" cy="6" r="4" fill="none" stroke="#dcdcdc" stroke-width="1.2"/><path d="M6,9 L2,13.5" stroke="#dcdcdc" stroke-width="1.3"/>
</svg>
<div class="dd" style="left:1892px;top:344px;width:19px;height:18px;border:1px solid #2e2e2e"></div>
<svg style="left:1897px;top:349px" width="10" height="8"><path d="M1.5,2 L4.5,5 L7.5,2" stroke="#cfcfcf" stroke-width="1.2" fill="none"/></svg>
<!-- nav icons -->
<svg style="left:1590px;top:366px" width="26" height="230">
 <g fill="#d0d0d0">
  <rect x="7.5" y="14" width="1.2" height="6"/><rect x="6" y="20" width="4.5" height="8" rx="1.5"/>
  <path d="M15,14 V18 A2.5,2.5 0 0 0 19,18 V14 M17,18 V28" stroke="#d0d0d0" stroke-width="1.4" fill="none"/>
 </g>
 <g transform="translate(0,40.5)">
  <rect x="6" y="13" width="14" height="10" fill="none" stroke="#d0d0d0" stroke-width="1.2"/>
  <rect x="9" y="10" width="4" height="3" fill="#d0d0d0"/><path d="M8.5,16 H15 M8.5,19 H15" stroke="#d0d0d0" stroke-width="1"/>
  <rect x="16.5" y="15" width="2" height="6" fill="#d0d0d0"/>
 </g>
 <g transform="translate(0,69)">
  <rect x="5.5" y="10" width="15" height="4" fill="#d0d0d0"/><rect x="8" y="14" width="10" height="9" fill="#d0d0d0"/>
  <path d="M9.5,21.5 L13,17 L16.5,21.5Z" fill="#444"/>
 </g>
 <g transform="translate(0,100)">
  <rect x="9.5" y="9.5" width="10" height="10" fill="none" stroke="#d0d0d0" stroke-width="1.2"/>
  <path d="M11,18 L14,13.5 L17,18Z" fill="#d0d0d0"/>
  <path d="M7.5,11.5 V21.5 H17.5 M5.5,13.5 V23.5 H15.5" stroke="#d0d0d0" stroke-width="1.1" fill="none"/>
 </g>
 <g transform="translate(0,126)">
  <path d="M9.5,8.5 L5.8,18.5 Q5.6,19.9 7.2,20 L11.8,20.1 Q12.7,19.9 12.2,18.5Z" fill="#d8d8d8"/><circle cx="17.2" cy="10.3" r="2" fill="#d8d8d8"/>
  <circle cx="15.3" cy="18.6" r="3.5" fill="#2e2e2e" stroke="#d8d8d8" stroke-width="1.3"/>
 </g>
 <g transform="translate(0,159)">
  <circle cx="13" cy="11" r="6.2" fill="#c48896"/>
  <path d="M8.5,7.5 C10,6 12.5,6.5 13.5,8 C12.5,9.5 11,9.5 11.5,11.5 C12,13 10.5,14.5 9,14 C7.5,12.5 7,10 8.5,7.5Z M14.5,12.5 C15.5,11 17.5,11 18.5,12.5 C17.5,15 15.5,16.5 13.5,16.5 C13.5,15 14,14 14.5,12.5Z M15,6 C16.5,6.3 18,7.5 18.8,9 C17,9 15.5,8 15,6Z" fill="#4e1c26"/>
  <circle cx="13" cy="11" r="6.2" fill="none" stroke="#c48896" stroke-width="1"/>
  <path d="M17.5,4.5 L19.5,3 M6,17 L8,15.5" stroke="#c48896" stroke-width="1"/>
 </g>
 <g transform="translate(0,204)">
  <rect x="6" y="4.5" width="14" height="14" fill="#c4909a"/>
  <path d="M9.5,4.5 h3.5 v3.5 h-3.5z M16.5,4.5 h3.5 v3.5 h-3.5z M6,8 h3.5 v3.5 h-3.5z M13,8 h3.5 v3.5 h-3.5z M9.5,11.5 h3.5 v3.5 h-3.5z M16.5,11.5 h3.5 v3.5 h-3.5z M6,15 h3.5 v3.5 h-3.5z M13,15 h3.5 v3.5 h-3.5z" fill="#4a1420"/>
 </g>
</svg>
<!-- breadcrumb -->
<svg style="left:1626px;top:376px" width="17" height="17">
 <path d="M4.6,2 L0.8,12 Q0.6,13.4 2.2,13.5 L6.8,13.6 Q7.7,13.4 7.2,12Z" fill="#d8d8d8"/><circle cx="12.2" cy="3.8" r="2" fill="#d8d8d8"/>
 <circle cx="10.3" cy="12.1" r="3.5" fill="#2e2e2e" stroke="#d8d8d8" stroke-width="1.3"/>
</svg>
<div class="t" style="left:1649px;top:379px">Scene</div>
<svg style="left:1695px;top:378px" width="10" height="12"><path d="M2.5,1.5 L7,6 L2.5,10.5" stroke="#cfcfcf" stroke-width="1.2" fill="none"/></svg>
<svg style="left:1711px;top:376px" width="17" height="17">
 <rect x="5.5" y="1.5" width="9" height="9" fill="none" stroke="#d8d8d8" stroke-width="1.2"/>
 <path d="M7,9 L10,5 L13,9Z" fill="#d8d8d8"/><circle cx="12.5" cy="3.8" r="0.9" fill="#d8d8d8"/>
 <path d="M3.5,3.5 V12.5 H12.5 M1.5,5.5 V14.5 H10.5" stroke="#d8d8d8" stroke-width="1.1" fill="none"/>
</svg>
<div class="t" style="left:1735px;top:379px">ViewLayer</div>
<svg style="left:1893px;top:376px" width="17" height="17">
 <path d="M9,1.5 L15,7.5 L12.5,8 L9,11.5 L9.5,13.5 L3.5,7.5 L5.5,8 L9,4.5Z" fill="none" stroke="#9a9a9a" stroke-width="1.1"/>
 <path d="M6,10.5 L1.5,15" stroke="#9a9a9a" stroke-width="1.1"/>
</svg>
<!-- scene panel -->
<div class="a" style="left:1624px;top:404px;width:288px;height:110px;background:#3d3d3d;border-radius:4px"></div>
<svg style="left:1630px;top:410px" width="12" height="12"><path d="M1.5,3.5 L5.5,7.5 L9.5,3.5" stroke="#cfcfcf" stroke-width="1.2" fill="none"/></svg>
<div class="t" style="left:1646px;top:411px">Scene</div>
<div class="t" style="left:1695px;top:441px;color:#d8d8d8">Camera</div>
<div class="t" style="left:1642px;top:466px;color:#d8d8d8">Background Scene</div>
<div class="t" style="left:1680px;top:491px;color:#d8d8d8">Active Clip</div>
<div class="a" style="left:1746px;top:438px;width:157px;height:18px;background:#1d1d1d;border-radius:4px"></div>
<div class="a" style="left:1746px;top:463px;width:157px;height:18px;background:#1d1d1d;border-radius:4px"></div>
<div class="a" style="left:1746px;top:488px;width:157px;height:18px;background:#1d1d1d;border-radius:4px"></div>
<svg style="left:1749px;top:439px" width="16" height="16">
 <path d="M1.5,4 V1.5 H4 M11,1.5 H13.5 V4 M13.5,11 V13.5 H11 M4,13.5 H1.5 V11" stroke="#cfcfcf" stroke-width="1" fill="none"/>
 <rect x="4" y="4" width="7" height="7" fill="#e6e6e6"/>
</svg>
<svg style="left:1884px;top:439px" width="16" height="16">
 <path d="M2,14 L8,8 M10,4 L12,2 A1.5,1.5 0 0 1 14,4 L12,6 M7,5 L11,9" stroke="#a0a0a0" stroke-width="1.6" fill="none"/>
</svg>
<svg style="left:1749px;top:464px" width="16" height="16">
 <path d="M4.3,1.5 L0.8,11 Q0.6,12.3 2,12.4 L6.3,12.5 Q7.1,12.3 6.7,11Z" fill="#d8d8d8"/><circle cx="11.4" cy="3.2" r="1.9" fill="#d8d8d8"/>
 <circle cx="9.6" cy="11.1" r="3.3" fill="#1d1d1d" stroke="#d8d8d8" stroke-width="1.2"/>
</svg>
<svg style="left:1749px;top:489px" width="16" height="16">
 <rect x="2" y="8" width="12" height="7" fill="#e6e6e6"/>
 <path d="M2,6.5 L13,2.5" stroke="#e6e6e6" stroke-width="2" stroke-dasharray="2 1.5"/>
 <rect x="2" y="3" width="2" height="4" fill="none" stroke="#e6e6e6" stroke-width="0.9"/>
</svg>

<div class="a" style="left:1624px;top:517px;width:288px;height:25px;background:#3d3d3d;border-radius:4px"></div>
<svg style="left:1632px;top:524px" width="10" height="12"><path d="M2.5,1.5 L6.5,5.5 L2.5,9.5" stroke="#cfcfcf" stroke-width="1.2" fill="none"/></svg>
<div class="t" style="left:1645px;top:525px">Units</div>
<div class="a" style="left:1624px;top:544px;width:288px;height:25px;background:#3d3d3d;border-radius:4px"></div>
<svg style="left:1632px;top:551px" width="10" height="12"><path d="M2.5,1.5 L6.5,5.5 L2.5,9.5" stroke="#cfcfcf" stroke-width="1.2" fill="none"/></svg>
<div class="a" style="left:1645px;top:551px;width:12px;height:12px;background:#4772b3;border-radius:3px"></div>
<svg style="left:1645px;top:551px" width="12" height="12"><path d="M2.5,6 L5,8.5 L9.5,3.5" stroke="#fff" stroke-width="1.6" fill="none"/></svg>
<div class="t" style="left:1659px;top:552px">Gravity</div>
<div class="a" style="left:1624px;top:571px;width:288px;height:25px;background:#3d3d3d;border-radius:4px"></div>
<svg style="left:1632px;top:578px" width="10" height="12"><path d="M2.5,1.5 L6.5,5.5 L2.5,9.5" stroke="#cfcfcf" stroke-width="1.2" fill="none"/></svg>
<div class="t" style="left:1645px;top:579px">Keying Sets</div>
<div class="a" style="left:1624px;top:598px;width:288px;height:25px;background:#3d3d3d;border-radius:4px"></div>
<svg style="left:1632px;top:605px" width="10" height="12"><path d="M2.5,1.5 L6.5,5.5 L2.5,9.5" stroke="#cfcfcf" stroke-width="1.2" fill="none"/></svg>
<div class="t" style="left:1645px;top:606px">Audio</div>
<div class="a" style="left:1624px;top:625px;width:288px;height:25px;background:#3d3d3d;border-radius:4px"></div>
<svg style="left:1632px;top:632px" width="10" height="12"><path d="M2.5,1.5 L6.5,5.5 L2.5,9.5" stroke="#cfcfcf" stroke-width="1.2" fill="none"/></svg>
<div class="t" style="left:1645px;top:633px">Rigid Body World</div>
<div class="a" style="left:1624px;top:652px;width:288px;height:25px;background:#3d3d3d;border-radius:4px"></div>
<svg style="left:1632px;top:659px" width="10" height="12"><path d="M2.5,1.5 L6.5,5.5 L2.5,9.5" stroke="#cfcfcf" stroke-width="1.2" fill="none"/></svg>
<div class="t" style="left:1645px;top:660px">Custom Properties</div>
<svg style="left:0;top:0" width="1920" height="1000"><rect x="1894.0" y="414.0" width="1.4" height="1.4" fill="#6a6a6a"/><rect x="1894.0" y="417.4" width="1.4" height="1.4" fill="#6a6a6a"/><rect x="1897.4" y="414.0" width="1.4" height="1.4" fill="#6a6a6a"/><rect x="1897.4" y="417.4" width="1.4" height="1.4" fill="#6a6a6a"/><rect x="1900.8" y="414.0" width="1.4" height="1.4" fill="#6a6a6a"/><rect x="1900.8" y="417.4" width="1.4" height="1.4" fill="#6a6a6a"/><rect x="1904.2" y="414.0" width="1.4" height="1.4" fill="#6a6a6a"/><rect x="1904.2" y="417.4" width="1.4" height="1.4" fill="#6a6a6a"/><rect x="1894.0" y="527.0" width="1.4" height="1.4" fill="#6a6a6a"/><rect x="1894.0" y="530.4" width="1.4" height="1.4" fill="#6a6a6a"/><rect x="1897.4" y="527.0" width="1.4" height="1.4" fill="#6a6a6a"/><rect x="1897.4" y="530.4" width="1.4" height="1.4" fill="#6a6a6a"/><rect x="1900.8" y="527.0" width="1.4" height="1.4" fill="#6a6a6a"/><rect x="1900.8" y="530.4" width="1.4" height="1.4" fill="#6a6a6a"/><rect x="1904.2" y="527.0" width="1.4" height="1.4" fill="#6a6a6a"/><rect x="1904.2" y="530.4" width="1.4" height="1.4" fill="#6a6a6a"/><rect x="1894.0" y="554.0" width="1.4" height="1.4" fill="#6a6a6a"/><rect x="1894.0" y="557.4" width="1.4" height="1.4" fill="#6a6a6a"/><rect x="1897.4" y="554.0" width="1.4" height="1.4" fill="#6a6a6a"/><rect x="1897.4" y="557.4" width="1.4" height="1.4" fill="#6a6a6a"/><rect x="1900.8" y="554.0" width="1.4" height="1.4" fill="#6a6a6a"/><rect x="1900.8" y="557.4" width="1.4" height="1.4" fill="#6a6a6a"/><rect x="1904.2" y="554.0" width="1.4" height="1.4" fill="#6a6a6a"/><rect x="1904.2" y="557.4" width="1.4" height="1.4" fill="#6a6a6a"/><rect x="1894.0" y="581.0" width="1.4" height="1.4" fill="#6a6a6a"/><rect x="1894.0" y="584.4" width="1.4" height="1.4" fill="#6a6a6a"/><rect x="1897.4" y="581.0" width="1.4" height="1.4" fill="#6a6a6a"/><rect x="1897.4" y="584.4" width="1.4" height="1.4" fill="#6a6a6a"/><rect x="1900.8" y="581.0" width="1.4" height="1.4" fill="#6a6a6a"/><rect x="1900.8" y="584.4" width="1.4" height="1.4" fill="#6a6a6a"/><rect x="1904.2" y="581.0" width="1.4" height="1.4" fill="#6a6a6a"/><rect x="1904.2" y="584.4" width="1.4" height="1.4" fill="#6a6a6a"/><rect x="1894.0" y="608.0" width="1.4" height="1.4" fill="#6a6a6a"/><rect x="1894.0" y="611.4" width="1.4" height="1.4" fill="#6a6a6a"/><rect x="1897.4" y="608.0" width="1.4" height="1.4" fill="#6a6a6a"/><rect x="1897.4" y="611.4" width="1.4" height="1.4" fill="#6a6a6a"/><rect x="1900.8" y="608.0" width="1.4" height="1.4" fill="#6a6a6a"/><rect x="1900.8" y="611.4" width="1.4" height="1.4" fill="#6a6a6a"/><rect x="1904.2" y="608.0" width="1.4" height="1.4" fill="#6a6a6a"/><rect x="1904.2" y="611.4" width="1.4" height="1.4" fill="#6a6a6a"/><rect x="1894.0" y="635.0" width="1.4" height="1.4" fill="#6a6a6a"/><rect x="1894.0" y="638.4" width="1.4" height="1.4" fill="#6a6a6a"/><rect x="1897.4" y="635.0" width="1.4" height="1.4" fill="#6a6a6a"/><rect x="1897.4" y="638.4" width="1.4" height="1.4" fill="#6a6a6a"/><rect x="1900.8" y="635.0" width="1.4" height="1.4" fill="#6a6a6a"/><rect x="1900.8" y="638.4" width="1.4" height="1.4" fill="#6a6a6a"/><rect x="1904.2" y="635.0" width="1.4" height="1.4" fill="#6a6a6a"/><rect x="1904.2" y="638.4" width="1.4" height="1.4" fill="#6a6a6a"/><rect x="1894.0" y="662.0" width="1.4" height="1.4" fill="#6a6a6a"/><rect x="1894.0" y="665.4" width="1.4" height="1.4" fill="#6a6a6a"/><rect x="1897.4" y="662.0" width="1.4" height="1.4" fill="#6a6a6a"/><rect x="1897.4" y="665.4" width="1.4" height="1.4" fill="#6a6a6a"/><rect x="1900.8" y="662.0" width="1.4" height="1.4" fill="#6a6a6a"/><rect x="1900.8" y="665.4" width="1.4" height="1.4" fill="#6a6a6a"/><rect x="1904.2" y="662.0" width="1.4" height="1.4" fill="#6a6a6a"/><rect x="1904.2" y="665.4" width="1.4" height="1.4" fill="#6a6a6a"/></svg>

<!-- ================= STATUS ================= -->
<div class="a" style="left:0;top:997px;width:1920px;height:20px;background:#1e1e1e"></div>
<svg style="left:11px;top:1000px" width="14" height="17">
 <path d="M2,5 A5,5 0 0 1 12,5 V11 A5,5 0 0 1 2,11Z" fill="none" stroke="#9a9a9a" stroke-width="1.1"/>
 <path d="M2,5 A5,5 0 0 1 7,0.5 V6.5 H2Z" fill="#c8c8c8"/>
</svg>
<div class="t" style="left:33px;top:1002px;color:#a5a5a5">Select</div>
<svg style="left:75px;top:1000px" width="18" height="17">
 <path d="M2,5 A5,5 0 0 1 12,5 V11 A5,5 0 0 1 2,11Z" fill="none" stroke="#9a9a9a" stroke-width="1.1"/>
 <path d="M2,5 A5,5 0 0 1 7,0.5 V6.5 H2Z" fill="#c8c8c8"/>
 <path d="M14,2 V7 M16,1 V8" stroke="#9a9a9a" stroke-width="0.9"/>
</svg>
<div class="t" style="left:99px;top:1002px;color:#a5a5a5">Box Select</div>
<svg style="left:221px;top:1000px" width="14" height="17">
 <path d="M2,5 A5,5 0 0 1 12,5 V11 A5,5 0 0 1 2,11Z" fill="none" stroke="#9a9a9a" stroke-width="1.1"/>
 <rect x="5.5" y="2" width="3" height="5" rx="1.2" fill="#c8c8c8"/>
</svg>
<div class="t" style="left:244px;top:1002px;color:#a5a5a5">Rotate View</div>
<svg style="left:433px;top:1000px" width="14" height="17">
 <path d="M2,5 A5,5 0 0 1 12,5 V11 A5,5 0 0 1 2,11Z" fill="none" stroke="#9a9a9a" stroke-width="1.1"/>
 <path d="M12,5 A5,5 0 0 0 7,0.5 V6.5 H12Z" fill="#c8c8c8"/>
</svg>
<div class="t" style="left:454px;top:1002px;color:#a5a5a5">Object Context Menu</div>
<div class="t" style="left:1885px;top:1002px;color:#8a8a8a">3.1.2</div>

</body></html>
